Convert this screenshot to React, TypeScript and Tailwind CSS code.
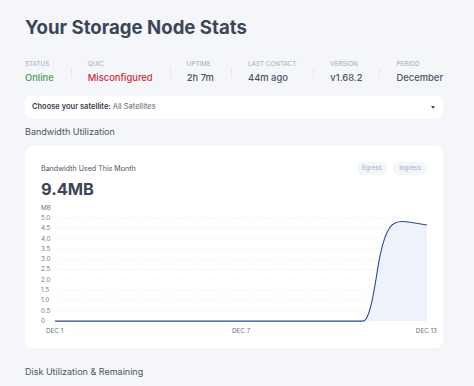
import React from 'react';

const stats = [
  { label: 'STATUS', value: 'Online', color: 'text-[#4f9a5a]' },
  { label: 'QUIC', value: 'Misconfigured', color: 'text-[#cf2a3c]' },
  { label: 'UPTIME', value: '2h 7m', color: 'text-[#4a5466]' },
  { label: 'LAST CONTACT', value: '44m ago', color: 'text-[#4a5466]' },
  { label: 'VERSION', value: 'v1.68.2', color: 'text-[#4a5466]' },
  { label: 'PERIOD', value: 'December', color: 'text-[#4a5466]' },
];

const yTicks = ['5.0', '4.5', '4.0', '3.5', '3.0', '2.5', '2.0', '1.5', '1.0', '0.5', '0'];

function Chart() {
  // tick i sits at y = 5.15 + i * 10.3 ; zero line at 108.15
  const step = 10.3;
  const top = 5.15;
  const zero = top + 10 * step;
  const curve = `M0 ${zero} L308 ${zero} C314 ${zero} 318 85 322 60 C326 33 332 13 340 10 C346 7 352 9 372 12`;
  return (
    <div className="flex mt-[1px]">
      <div className="flex flex-col w-[14px] text-[6.3px] leading-none text-[#747c88]">
        {yTicks.map((t) => (
          <div key={t} className="h-[10.3px] flex items-center">{t}</div>
        ))}
      </div>
      <svg width="372" height="113" viewBox="0 0 372 113">
        {yTicks.map((t, i) =>
          t === '0' ? null : (
            <line
              key={t}
              x1="2"
              x2="372"
              y1={top + i * step}
              y2={top + i * step}
              stroke="#e8ebef"
              strokeWidth="0.8"
              strokeDasharray="1.5 2"
            />
          )
        )}
        <path d={`${curve} L372 ${zero} Z`} fill="#eef2fa" />
        <path d={curve} fill="none" stroke="#2c4791" strokeWidth="1.1" />
      </svg>
    </div>
  );
}

export default function App() {
  return (
    <div
      className="w-[474px] h-[386px] overflow-hidden bg-[#f4f6f9] pl-[25px] pt-[13px]"
      style={{ fontFamily: 'Inter, "Noto Sans", sans-serif' }}
    >
      <div className="w-[418px]">
        <h1 className="text-[18.6px] leading-[28px] font-bold text-[#3c4658] whitespace-nowrap">
          Your Storage Node Stats
        </h1>

        <div className="flex items-start mt-[19px] whitespace-nowrap">
          {stats.map((s, i) => (
            <React.Fragment key={s.label}>
              {i > 0 && <div className="w-px h-[10px] bg-[#e4e7ec] mx-[17px] mt-[8px]" />}
              <div className="flex flex-col">
                <span className="text-[6.3px] leading-[9px] text-[#a3abb7]">{s.label}</span>
                <span className={`text-[9.4px] leading-[14px] font-medium mt-[1.5px] ${s.color}`}>{s.value}</span>
              </div>
            </React.Fragment>
          ))}
        </div>

        <div className="mt-[11.5px] h-[22px] bg-white rounded-md flex items-center px-[7px] justify-between">
          <div className="text-[7.5px] text-[#5b6472] whitespace-nowrap">
            <span className="font-semibold text-[#394150]">Choose your satellite:</span> All Satellites
          </div>
          <div className="w-0 h-0 border-l-[2.5px] border-r-[2.5px] border-t-[3px] border-l-transparent border-r-transparent border-t-[#4a5160] mr-[1px]" />
        </div>

        <h2 className="text-[9px] leading-[14px] text-[#4b5565] mt-[7px]">Bandwidth Utilization</h2>

        <div className="mt-[7px] bg-white rounded-lg h-[202px] px-[16px] pt-[18px]">
          <div className="flex justify-between items-start">
            <div>
              <div className="text-[7.1px] leading-[10px] text-[#4b5565]">Bandwidth Used This Month</div>
              <div className="text-[16.4px] leading-[22px] font-bold text-[#3c4658] mt-[4px]">9.4MB</div>
            </div>
            <div className="flex gap-[5px] mt-[-2px]">
              <span className="h-[13px] px-[6px] rounded-full bg-[#f3f6fb] text-[6.3px] text-[#a4adbb] flex items-center">Egress</span>
              <span className="h-[13px] px-[6px] rounded-full bg-[#f3f6fb] text-[6.3px] text-[#a4adbb] flex items-center">Ingress</span>
            </div>
          </div>
          <div className="text-[6.3px] leading-[8px] text-[#6b7280] mt-[4px]">MB</div>
          <Chart />
          <div className="relative h-[10px] text-[6.3px] leading-[10px] text-[#6b7280]">
            <span className="absolute left-[5px]">DEC 1</span>
            <span className="absolute left-[191px]">DEC 7</span>
            <span className="absolute right-[-10px]">DEC 13</span>
          </div>
        </div>

        <h2 className="text-[9px] leading-[14px] text-[#4b5565] mt-[17px]">Disk Utilization &amp; Remaining</h2>
      </div>
    </div>
  );
}
